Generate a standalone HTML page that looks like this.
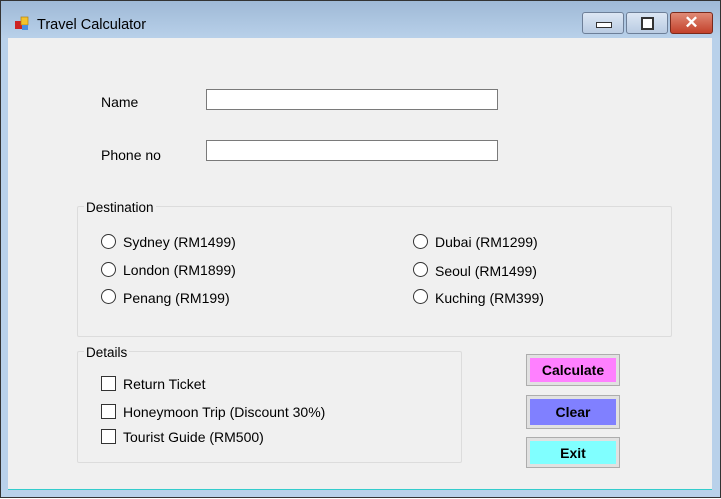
<!DOCTYPE html>
<html><head><style>
body{margin:0;width:721px;height:499px;overflow:hidden;font-family:"Liberation Sans",sans-serif;font-size:14px;color:#000;background:#fff}
.win{position:absolute;left:0;top:0;width:719px;height:496px;border:1px solid #333;background:linear-gradient(#9fb9d6 0px,#b9d1ea 38px,#b9d1ea 100%);}
.client{position:absolute;left:8px;top:38px;width:704px;height:451px;background:#f0f0f0;border-bottom:1px solid #3cc;}
.a{position:absolute;white-space:nowrap}
.tb{position:absolute;height:19px;width:290px;background:#fff;border:1px solid #7a7a7a}
.gb{position:absolute;border:1px solid #dcdcdc;border-radius:2px}
.gl{position:absolute;background:#f0f0f0;padding:0 2px;top:-7px;left:6px;font-size:13.5px}
.r{position:absolute;width:13px;height:13px;border:1px solid #333;border-radius:50%;background:#fff}
.c{position:absolute;width:13px;height:13px;border:1px solid #333;background:#fff}
.btn{position:absolute;width:94px;height:30px;border:1px solid #adadad;box-sizing:border-box;padding:3px;background:#e1e1e1}
.btn div{width:100%;height:100%;display:flex;align-items:center;justify-content:center;font-weight:bold;font-size:14px}
.cb{position:absolute;top:11px;height:22px;border:1px solid #6d7f98;border-radius:3px;box-sizing:border-box;background:linear-gradient(#dce7f4,#b9cbe2)}
</style></head><body>
<div class="win">
<svg class="a" style="left:13px;top:15px" width="16" height="16"><rect x="1" y="5" width="7" height="8" fill="#c22"/><rect x="7" y="1" width="7" height="8" fill="#f3c22c" stroke="#b08010" stroke-width=".7"/><rect x="8" y="9" width="6" height="5" fill="#4a8ee0"/></svg>
<div class="a" style="left:36px;top:16px;font-size:14.5px">Travel Calculator</div>
<div class="cb" style="left:581px;width:42px"><div style="position:absolute;left:13px;top:9px;width:14px;height:4px;border:1px solid #333;background:#fff"></div></div>
<div class="cb" style="left:625px;width:42px"><div style="position:absolute;left:14px;top:4px;width:9px;height:9px;border:2px solid #333;background:#fff"></div></div>
<div class="cb" style="left:669px;width:43px;background:linear-gradient(#e08a76,#c3412b);border-color:#7a2a1c"><div style="position:absolute;left:0;right:0;top:0;text-align:center;color:#fff;font-weight:bold;font-size:17px;line-height:20px">✕</div></div>
</div>
<div class="client">
<div class="a" style="left:93px;top:56px">Name</div>
<div class="tb" style="left:198px;top:51px"></div>
<div class="a" style="left:93px;top:109px">Phone no</div>
<div class="tb" style="left:198px;top:102px"></div>
<div class="gb" style="left:69px;top:168px;width:593px;height:129px"><div class="gl">Destination</div></div>
<div class="r" style="left:93px;top:196px"></div><div class="a" style="left:115px;top:196px">Sydney (RM1499)</div>
<div class="r" style="left:93px;top:224px"></div><div class="a" style="left:115px;top:224px">London (RM1899)</div>
<div class="r" style="left:93px;top:251px"></div><div class="a" style="left:115px;top:252px">Penang (RM199)</div>
<div class="r" style="left:405px;top:196px"></div><div class="a" style="left:427px;top:196px">Dubai (RM1299)</div>
<div class="r" style="left:405px;top:224px"></div><div class="a" style="left:427px;top:225px">Seoul (RM1499)</div>
<div class="r" style="left:405px;top:251px"></div><div class="a" style="left:427px;top:252px">Kuching (RM399)</div>
<div class="gb" style="left:69px;top:313px;width:383px;height:110px"><div class="gl">Details</div></div>
<div class="c" style="left:93px;top:338px"></div><div class="a" style="left:115px;top:338px">Return Ticket</div>
<div class="c" style="left:93px;top:366px"></div><div class="a" style="left:115px;top:366px">Honeymoon Trip (Discount 30%)</div>
<div class="c" style="left:93px;top:391px"></div><div class="a" style="left:115px;top:391px">Tourist Guide (RM500)</div>
<div class="btn" style="left:518px;top:316px;height:32px"><div style="background:#ff80ff">Calculate</div></div>
<div class="btn" style="left:518px;top:357px;height:34px"><div style="background:#8080ff">Clear</div></div>
<div class="btn" style="left:518px;top:399px;height:31px"><div style="background:#80ffff">Exit</div></div>
</div>
</body></html>
